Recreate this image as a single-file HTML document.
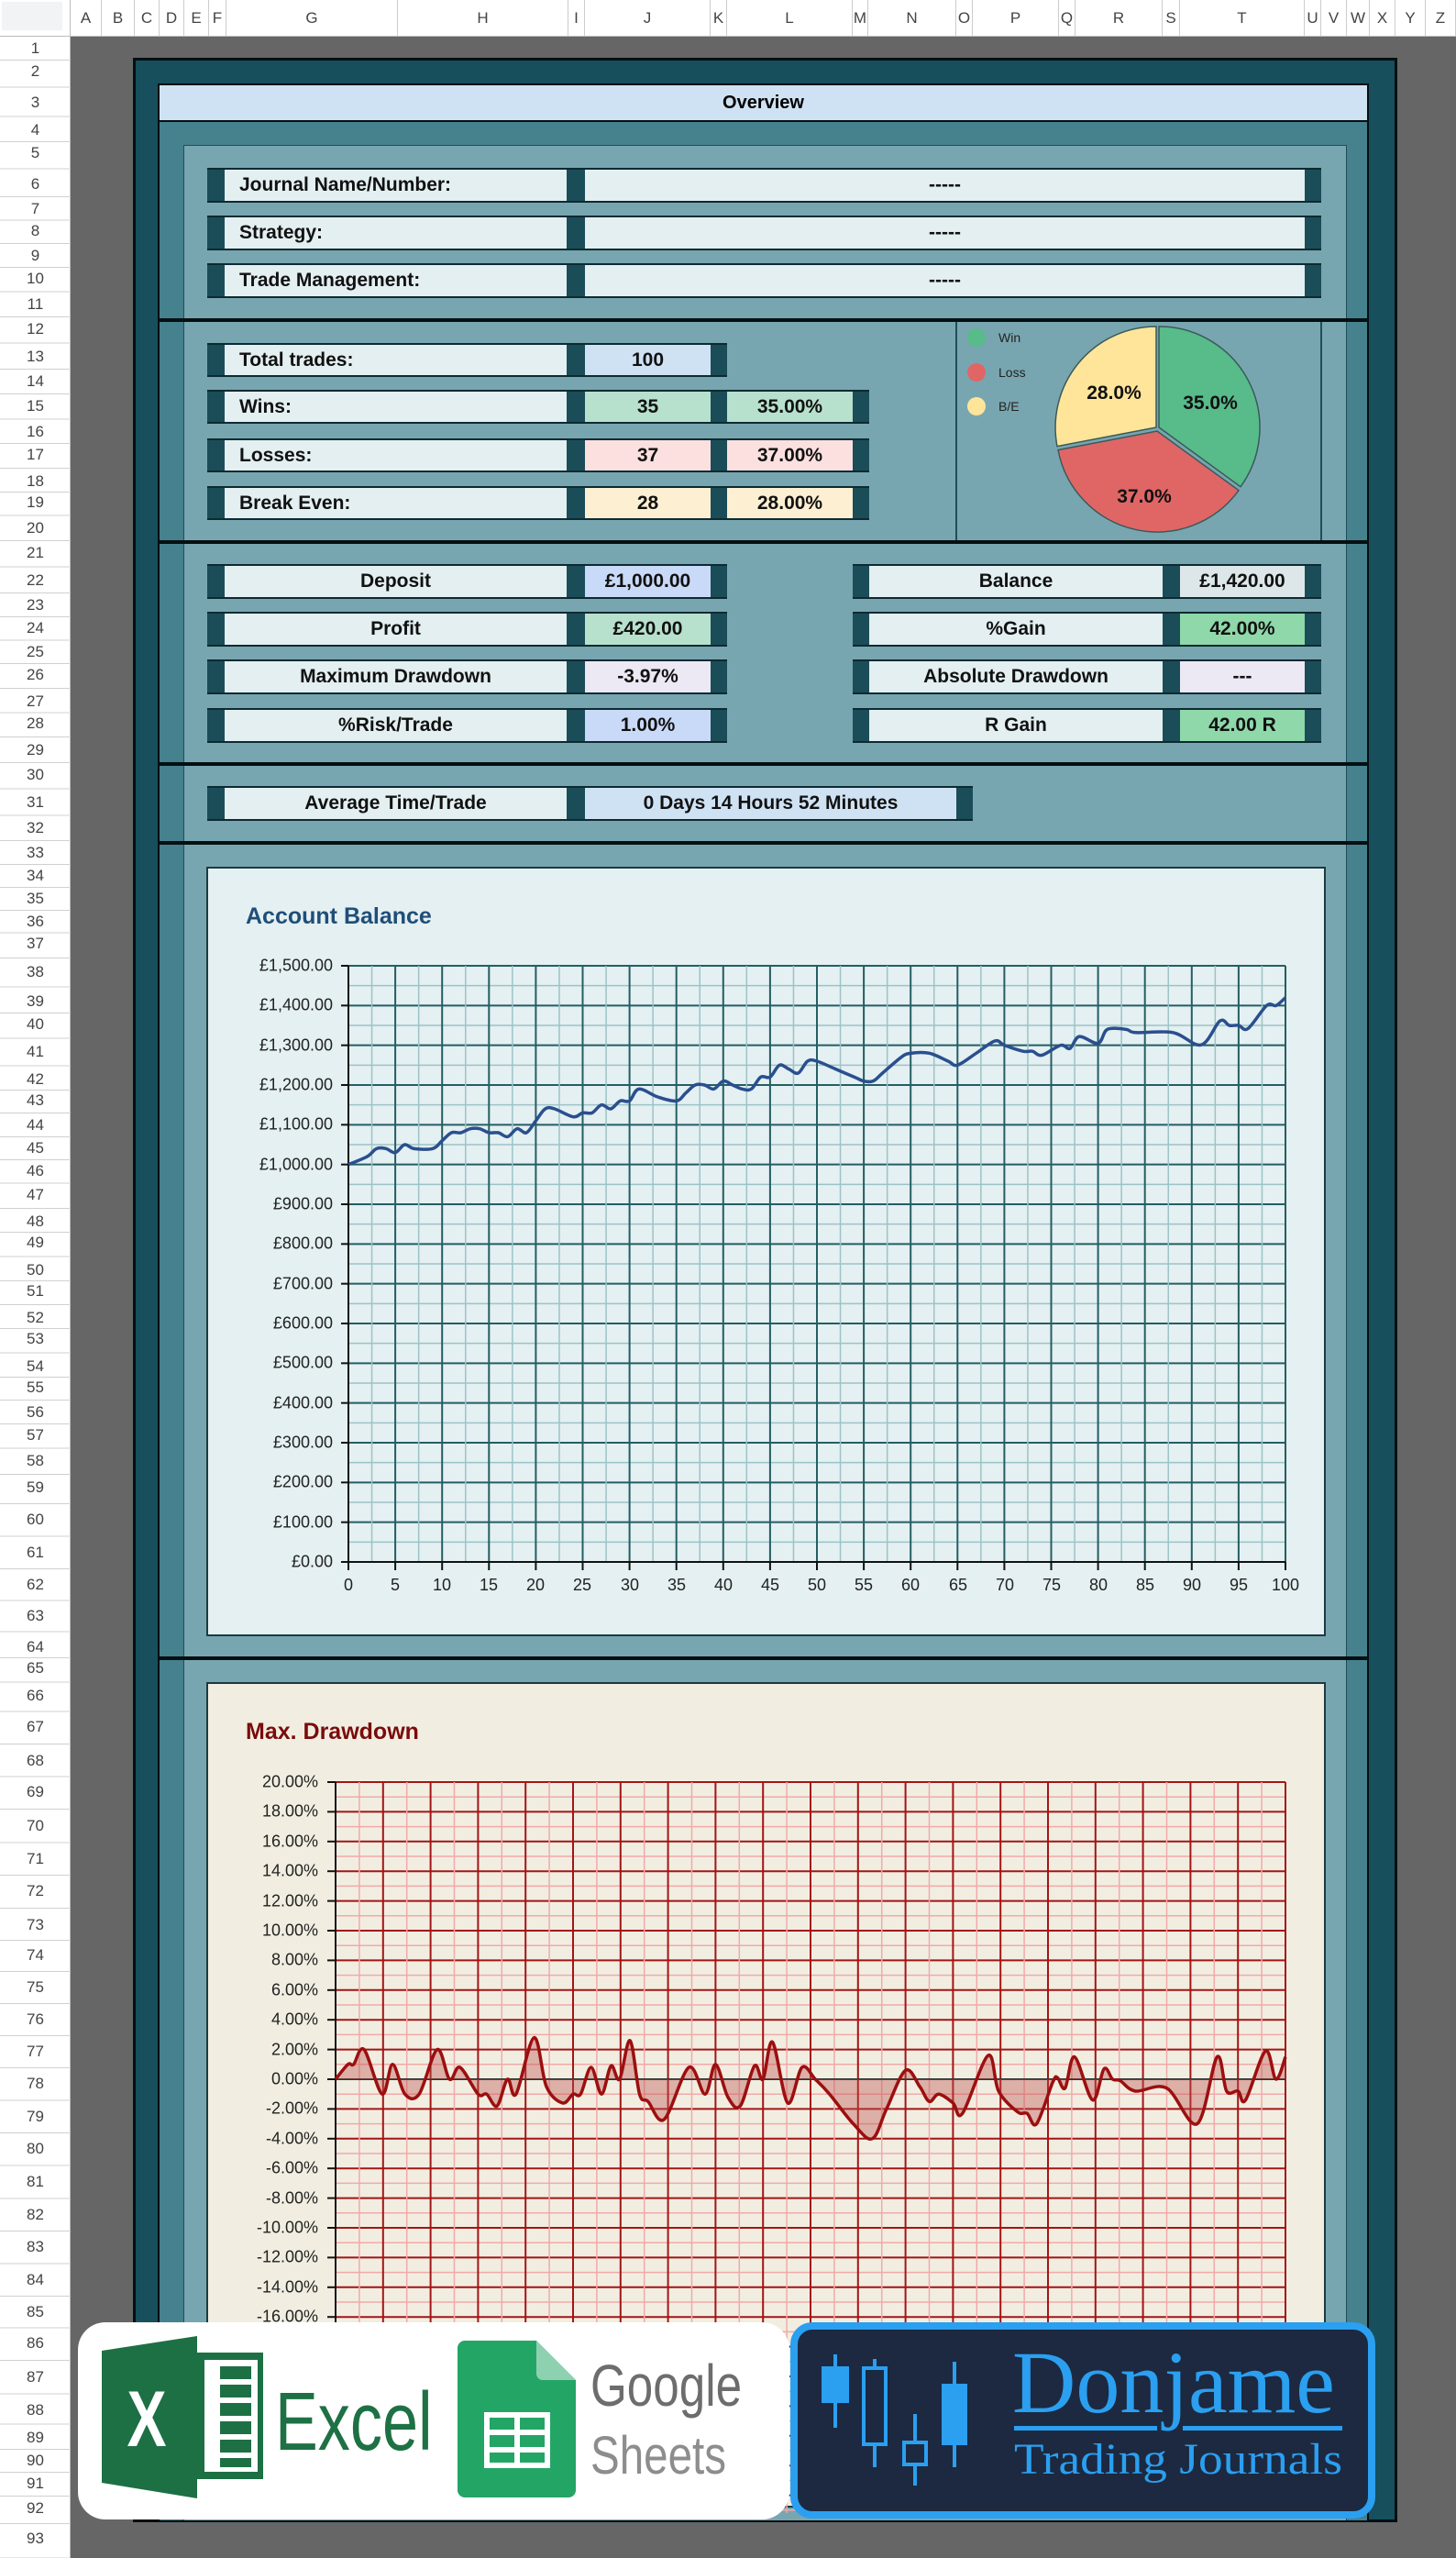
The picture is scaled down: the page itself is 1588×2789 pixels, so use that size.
<!DOCTYPE html>
<html><head><meta charset="utf-8">
<style>
*{margin:0;padding:0;box-sizing:border-box}
body{width:1588px;height:2789px;position:relative;overflow:hidden;background:#666;font-family:"Liberation Sans",Arial,sans-serif}
.a{position:absolute}
.ch{position:absolute;top:0;height:40px;background:#fff;border-right:1px solid #ccc;border-bottom:1px solid #bbb;color:#444;font-size:17px;text-align:center;line-height:40px}
.rh{position:absolute;left:0;width:77px;color:#444;font-size:17px;text-align:center;transform:translateY(-50%)}
.row{position:absolute;background:#1b4d59;border-top:2px solid #0c2a31;border-bottom:2px solid #0c2a31}
.c{position:absolute;top:0;bottom:0;font-weight:bold;font-size:21px;color:#111;display:flex;align-items:center;justify-content:center;white-space:nowrap}
.lbl{background:#e3eff1}
.l{justify-content:flex-start;padding-left:16px}
.yl{position:absolute;font-size:18px;color:#222;text-align:right;width:140px;transform:translateY(-50%)}
.xl{position:absolute;font-size:18px;color:#222;width:40px;text-align:center;transform:translateX(-50%)}
.sep{position:absolute;left:172px;width:1321px;height:4px;background:#050f12}
.inner{position:absolute;left:200px;width:1269px;background:#78a6b0;border-left:1px solid #1e4e58;border-right:1px solid #1e4e58}
</style></head><body>
<div class="a" style="left:0;top:0;width:1588px;height:40px;background:#fff"></div>
<div class="a" style="left:0;top:0;width:77px;height:40px;background:#fff;border-right:1px solid #bbb;border-bottom:1px solid #bbb"><div class="a" style="left:2px;top:2px;width:66px;height:31px;background:#f1f3f4"></div></div>
<div class="ch" style="left:77px;width:34px">A</div>
<div class="ch" style="left:111px;width:36px">B</div>
<div class="ch" style="left:147px;width:27px">C</div>
<div class="ch" style="left:174px;width:27px">D</div>
<div class="ch" style="left:201px;width:27px">E</div>
<div class="ch" style="left:228px;width:19px">F</div>
<div class="ch" style="left:247px;width:187px">G</div>
<div class="ch" style="left:434px;width:186px">H</div>
<div class="ch" style="left:620px;width:18px">I</div>
<div class="ch" style="left:638px;width:137px">J</div>
<div class="ch" style="left:775px;width:18px">K</div>
<div class="ch" style="left:793px;width:137px">L</div>
<div class="ch" style="left:930px;width:17px">M</div>
<div class="ch" style="left:947px;width:96px">N</div>
<div class="ch" style="left:1043px;width:18px">O</div>
<div class="ch" style="left:1061px;width:94px">P</div>
<div class="ch" style="left:1155px;width:18px">Q</div>
<div class="ch" style="left:1173px;width:95px">R</div>
<div class="ch" style="left:1268px;width:19px">S</div>
<div class="ch" style="left:1287px;width:136px">T</div>
<div class="ch" style="left:1423px;width:18px">U</div>
<div class="ch" style="left:1441px;width:28px">V</div>
<div class="ch" style="left:1469px;width:25px">W</div>
<div class="ch" style="left:1494px;width:28px">X</div>
<div class="ch" style="left:1522px;width:33px">Y</div>
<div class="ch" style="left:1555px;width:33px">Z</div>
<div class="a" style="left:0;top:40px;width:77px;height:2749px;background:#fff;border-right:1px solid #bbb"></div>
<div id="rows">
<div class="rh" style="top:53px">1</div><div class="rh" style="top:78px">2</div><div class="rh" style="top:112px">3</div><div class="rh" style="top:142px">4</div><div class="rh" style="top:167px">5</div><div class="rh" style="top:201px">6</div><div class="rh" style="top:228px">7</div><div class="rh" style="top:252px">8</div><div class="rh" style="top:279px">9</div><div class="rh" style="top:304px">10</div><div class="rh" style="top:332px">11</div><div class="rh" style="top:359px">12</div><div class="rh" style="top:389px">13</div><div class="rh" style="top:416px">14</div><div class="rh" style="top:443px">15</div><div class="rh" style="top:471px">16</div><div class="rh" style="top:496px">17</div><div class="rh" style="top:525px">18</div><div class="rh" style="top:548px">19</div><div class="rh" style="top:576px">20</div><div class="rh" style="top:603px">21</div><div class="rh" style="top:633px">22</div><div class="rh" style="top:660px">23</div><div class="rh" style="top:685px">24</div><div class="rh" style="top:711px">25</div><div class="rh" style="top:736px">26</div><div class="rh" style="top:765px">27</div><div class="rh" style="top:789px">28</div><div class="rh" style="top:818px">29</div><div class="rh" style="top:845px">30</div><div class="rh" style="top:875px">31</div><div class="rh" style="top:903px">32</div><div class="rh" style="top:930px">33</div><div class="rh" style="top:955px">34</div><div class="rh" style="top:980px">35</div><div class="rh" style="top:1005px">36</div><div class="rh" style="top:1029px">37</div><div class="rh" style="top:1060px">38</div><div class="rh" style="top:1092px">39</div><div class="rh" style="top:1117px">40</div><div class="rh" style="top:1147px">41</div><div class="rh" style="top:1177px">42</div><div class="rh" style="top:1200px">43</div><div class="rh" style="top:1227px">44</div><div class="rh" style="top:1252px">45</div><div class="rh" style="top:1277px">46</div><div class="rh" style="top:1303px">47</div><div class="rh" style="top:1332px">48</div><div class="rh" style="top:1355px">49</div><div class="rh" style="top:1385px">50</div><div class="rh" style="top:1408px">51</div><div class="rh" style="top:1437px">52</div><div class="rh" style="top:1460px">53</div><div class="rh" style="top:1490px">54</div><div class="rh" style="top:1513px">55</div><div class="rh" style="top:1540px">56</div><div class="rh" style="top:1565px">57</div><div class="rh" style="top:1593px">58</div><div class="rh" style="top:1622px">59</div><div class="rh" style="top:1657px">60</div><div class="rh" style="top:1693px">61</div><div class="rh" style="top:1728px">62</div><div class="rh" style="top:1762px">63</div><div class="rh" style="top:1796px">64</div><div class="rh" style="top:1819px">65</div><div class="rh" style="top:1849px">66</div><div class="rh" style="top:1883px">67</div><div class="rh" style="top:1920px">68</div><div class="rh" style="top:1954px">69</div><div class="rh" style="top:1991px">70</div><div class="rh" style="top:2027px">71</div><div class="rh" style="top:2062px">72</div><div class="rh" style="top:2099px">73</div><div class="rh" style="top:2132px">74</div><div class="rh" style="top:2167px">75</div><div class="rh" style="top:2202px">76</div><div class="rh" style="top:2237px">77</div><div class="rh" style="top:2272px">78</div><div class="rh" style="top:2308px">79</div><div class="rh" style="top:2343px">80</div><div class="rh" style="top:2379px">81</div><div class="rh" style="top:2415px">82</div><div class="rh" style="top:2450px">83</div><div class="rh" style="top:2486px">84</div><div class="rh" style="top:2521px">85</div><div class="rh" style="top:2555px">86</div><div class="rh" style="top:2592px">87</div><div class="rh" style="top:2628px">88</div><div class="rh" style="top:2658px">89</div><div class="rh" style="top:2683px">90</div><div class="rh" style="top:2708px">91</div><div class="rh" style="top:2735px">92</div><div class="rh" style="top:2768px">93</div>
</div>

<div class="a" style="left:145px;top:63px;width:1379px;height:2687px;background:#174f5c;border:3px solid #050f12"></div>
<div class="a" style="left:172px;top:130px;width:1321px;height:2618px;background:#46818e;border-left:2px solid #050f12;border-right:2px solid #050f12"></div>
<div class="a" style="left:172px;top:91px;width:1321px;height:42px;background:#cfe2f3;border:2px solid #050f12;font-weight:bold;font-size:20px;text-align:center;line-height:38px">Overview</div>

<div class="inner" style="top:158px;height:191px;border-top:1px solid #1e4e58"></div>
<div class="inner" style="top:349px;height:242px"></div>
<div class="inner" style="top:591px;height:242px"></div>
<div class="inner" style="top:833px;height:86px"></div>
<div class="inner" style="top:919px;height:889px"></div>
<div class="inner" style="top:1808px;height:940px"></div>
<div class="sep" style="top:347px"></div>
<div class="sep" style="top:589px"></div>
<div class="sep" style="top:831px"></div>
<div class="sep" style="top:917px"></div>
<div class="sep" style="top:1806px"></div>
<div class="a" style="left:1042px;top:351px;width:2px;height:238px;background:#1e4e58"></div>
<div class="a" style="left:1440px;top:351px;width:2px;height:238px;background:#1e4e58"></div>

<div class="row" style="left:226px;top:183px;width:1215px;height:38px"><div class="c lbl l" style="left:19px;width:373px">Journal Name/Number:</div><div class="c lbl" style="left:412px;width:785px">-----</div></div>
<div class="row" style="left:226px;top:235px;width:1215px;height:38px"><div class="c lbl l" style="left:19px;width:373px">Strategy:</div><div class="c lbl" style="left:412px;width:785px">-----</div></div>
<div class="row" style="left:226px;top:287px;width:1215px;height:38px"><div class="c lbl l" style="left:19px;width:373px">Trade Management:</div><div class="c lbl" style="left:412px;width:785px">-----</div></div>

<div class="row" style="left:226px;top:374px;width:567px;height:37px"><div class="c lbl l" style="left:19px;width:373px">Total trades:</div><div class="c" style="left:412px;width:137px;background:#cfe2f3">100</div></div>
<div class="row" style="left:226px;top:425px;width:722px;height:37px"><div class="c lbl l" style="left:19px;width:373px">Wins:</div><div class="c" style="left:412px;width:137px;background:#b7e1cd">35</div><div class="c" style="left:567px;width:137px;background:#b7e1cd">35.00%</div></div>
<div class="row" style="left:226px;top:478px;width:722px;height:37px"><div class="c lbl l" style="left:19px;width:373px">Losses:</div><div class="c" style="left:412px;width:137px;background:#fce0e0">37</div><div class="c" style="left:567px;width:137px;background:#fce0e0">37.00%</div></div>
<div class="row" style="left:226px;top:530px;width:722px;height:37px"><div class="c lbl l" style="left:19px;width:373px">Break Even:</div><div class="c" style="left:412px;width:137px;background:#fcefd2">28</div><div class="c" style="left:567px;width:137px;background:#fcefd2">28.00%</div></div>

<svg class="a" style="left:0;top:0" width="1588" height="700">
<circle cx="1065" cy="368" r="10" fill="#57bb8a"/><circle cx="1065" cy="406" r="10" fill="#e06666"/><circle cx="1065" cy="443" r="10" fill="#ffe599"/>
<text x="1089" y="373" font-size="14" fill="#222" font-family="Liberation Sans">Win</text>
<text x="1089" y="411" font-size="14" fill="#222" font-family="Liberation Sans">Loss</text>
<text x="1089" y="448" font-size="14" fill="#222" font-family="Liberation Sans">B/E</text>
<path d="M1264,466 L1264,356 A110,110 0 0 1 1353,530.7 Z" fill="#57bb8a" stroke="#3a5a5a" stroke-width="1.5"/>
<path d="M1262,470 L1351,534.7 A110,110 0 0 1 1154,490.6 Z" fill="#e06666" stroke="#3a5a5a" stroke-width="1.5"/>
<path d="M1261,466 L1153,486.6 A110,110 0 0 1 1261,356 Z" fill="#ffe599" stroke="#3a5a5a" stroke-width="1.5"/>
<g font-family="Liberation Sans" font-weight="bold" font-size="21" fill="#111" text-anchor="middle">
<text x="1215" y="435">28.0%</text><text x="1320" y="446">35.0%</text><text x="1248" y="548">37.0%</text></g>
</svg>

<div class="row" style="left:226px;top:615px;width:567px;height:38px"><div class="c lbl" style="left:19px;width:373px">Deposit</div><div class="c" style="left:412px;width:137px;background:#c9daf8">£1,000.00</div></div>
<div class="row" style="left:226px;top:667px;width:567px;height:38px"><div class="c lbl" style="left:19px;width:373px">Profit</div><div class="c" style="left:412px;width:137px;background:#b7e1cd">£420.00</div></div>
<div class="row" style="left:226px;top:719px;width:567px;height:38px"><div class="c lbl" style="left:19px;width:373px">Maximum Drawdown</div><div class="c" style="left:412px;width:137px;background:#ece8f4">-3.97%</div></div>
<div class="row" style="left:226px;top:772px;width:567px;height:38px"><div class="c lbl" style="left:19px;width:373px">%Risk/Trade</div><div class="c" style="left:412px;width:137px;background:#c9daf8">1.00%</div></div>
<div class="row" style="left:930px;top:615px;width:511px;height:38px"><div class="c lbl" style="left:18px;width:320px">Balance</div><div class="c" style="left:357px;width:136px;background:#dde6e8">£1,420.00</div></div>
<div class="row" style="left:930px;top:667px;width:511px;height:38px"><div class="c lbl" style="left:18px;width:320px">%Gain</div><div class="c" style="left:357px;width:136px;background:#8ed8aa">42.00%</div></div>
<div class="row" style="left:930px;top:719px;width:511px;height:38px"><div class="c lbl" style="left:18px;width:320px">Absolute Drawdown</div><div class="c" style="left:357px;width:136px;background:#ece8f4">---</div></div>
<div class="row" style="left:930px;top:772px;width:511px;height:38px"><div class="c lbl" style="left:18px;width:320px">R Gain</div><div class="c" style="left:357px;width:136px;background:#8ed8aa">42.00 R</div></div>

<div class="row" style="left:226px;top:857px;width:835px;height:38px"><div class="c lbl" style="left:19px;width:373px">Average Time/Trade</div><div class="c" style="left:412px;width:405px;background:#cfe2f3">0 Days 14 Hours 52 Minutes</div></div>

<div class="a" style="left:225px;top:945px;width:1221px;height:839px;background:#e4f0f2;border:2px solid #1d3a40"></div>
<div class="a" style="left:268px;top:985px;font-size:25px;font-weight:bold;color:#1f4e79">Account Balance</div>
<div class="a" style="left:225px;top:1834px;width:1221px;height:900px;background:#f1eee1;border:2px solid #1d3a40"></div>
<div class="a" style="left:268px;top:1874px;font-size:25px;font-weight:bold;color:#7a0c0c">Max. Drawdown</div>
<svg id="charts" class="a" style="left:0;top:0" width="1588" height="2789"></svg>

<div class="yl" style="left:223px;top:1053px">£1,500.00</div><div class="yl" style="left:223px;top:1096px">£1,400.00</div><div class="yl" style="left:223px;top:1140px">£1,300.00</div><div class="yl" style="left:223px;top:1183px">£1,200.00</div><div class="yl" style="left:223px;top:1226px">£1,100.00</div><div class="yl" style="left:223px;top:1270px">£1,000.00</div><div class="yl" style="left:223px;top:1313px">£900.00</div><div class="yl" style="left:223px;top:1356px">£800.00</div><div class="yl" style="left:223px;top:1400px">£700.00</div><div class="yl" style="left:223px;top:1443px">£600.00</div><div class="yl" style="left:223px;top:1486px">£500.00</div><div class="yl" style="left:223px;top:1530px">£400.00</div><div class="yl" style="left:223px;top:1573px">£300.00</div><div class="yl" style="left:223px;top:1616px">£200.00</div><div class="yl" style="left:223px;top:1660px">£100.00</div><div class="yl" style="left:223px;top:1703px">£0.00</div>
<div class="xl" style="left:380px;top:1718px">0</div><div class="xl" style="left:431px;top:1718px">5</div><div class="xl" style="left:482px;top:1718px">10</div><div class="xl" style="left:533px;top:1718px">15</div><div class="xl" style="left:584px;top:1718px">20</div><div class="xl" style="left:635px;top:1718px">25</div><div class="xl" style="left:687px;top:1718px">30</div><div class="xl" style="left:738px;top:1718px">35</div><div class="xl" style="left:789px;top:1718px">40</div><div class="xl" style="left:840px;top:1718px">45</div><div class="xl" style="left:891px;top:1718px">50</div><div class="xl" style="left:942px;top:1718px">55</div><div class="xl" style="left:993px;top:1718px">60</div><div class="xl" style="left:1045px;top:1718px">65</div><div class="xl" style="left:1096px;top:1718px">70</div><div class="xl" style="left:1147px;top:1718px">75</div><div class="xl" style="left:1198px;top:1718px">80</div><div class="xl" style="left:1249px;top:1718px">85</div><div class="xl" style="left:1300px;top:1718px">90</div><div class="xl" style="left:1351px;top:1718px">95</div><div class="xl" style="left:1402px;top:1718px">100</div>

<div class="yl" style="left:207px;top:1943px">20.00%</div><div class="yl" style="left:207px;top:1975px">18.00%</div><div class="yl" style="left:207px;top:2008px">16.00%</div><div class="yl" style="left:207px;top:2040px">14.00%</div><div class="yl" style="left:207px;top:2073px">12.00%</div><div class="yl" style="left:207px;top:2105px">10.00%</div><div class="yl" style="left:207px;top:2137px">8.00%</div><div class="yl" style="left:207px;top:2170px">6.00%</div><div class="yl" style="left:207px;top:2202px">4.00%</div><div class="yl" style="left:207px;top:2235px">2.00%</div><div class="yl" style="left:207px;top:2267px">0.00%</div><div class="yl" style="left:207px;top:2299px">-2.00%</div><div class="yl" style="left:207px;top:2332px">-4.00%</div><div class="yl" style="left:207px;top:2364px">-6.00%</div><div class="yl" style="left:207px;top:2397px">-8.00%</div><div class="yl" style="left:207px;top:2429px">-10.00%</div><div class="yl" style="left:207px;top:2461px">-12.00%</div><div class="yl" style="left:207px;top:2494px">-14.00%</div><div class="yl" style="left:207px;top:2526px">-16.00%</div><div class="yl" style="left:207px;top:2559px">-18.00%</div><div class="yl" style="left:207px;top:2591px">-20.00%</div>

<div class="a" style="left:85px;top:2532px;width:776px;height:215px;background:#fff;border-radius:30px"></div>
<svg class="a" style="left:0;top:2500px" width="1588" height="289">
<polygon points="111,63 215,47 215,224 111,207" fill="#1d7044"/>
<rect x="215" y="65" width="72" height="138" fill="#1d7044"/>
<rect x="223" y="73" width="58" height="122" fill="#fff"/>
<g fill="#1d7044"><rect x="240" y="80" width="34" height="14"/><rect x="240" y="100" width="34" height="14"/><rect x="240" y="120" width="34" height="14"/><rect x="240" y="140" width="34" height="14"/><rect x="240" y="160" width="34" height="14"/><rect x="240" y="180" width="34" height="10"/></g>
<text x="160" y="167" font-family="Liberation Sans" font-weight="bold" font-size="86" fill="#fff" text-anchor="middle" transform="translate(160 0) scale(0.75 1) translate(-160 0)">X</text>
<text x="300" y="171" font-family="Liberation Sans" font-size="90" fill="#1e7145" transform="translate(300 0) scale(0.78 1) translate(-300 0)">Excel</text>
<path d="M507,52 H585 L628,95 V215 a8,8 0 0 1 -8,8 H507 a8,8 0 0 1 -8,-8 V60 a8,8 0 0 1 8,-8 Z" fill="#23a566"/>
<path d="M585,52 L628,95 H592 a7,7 0 0 1 -7,-7 Z" fill="#8ed1b1"/>
<rect x="528" y="130" width="72" height="61" fill="#fff"/>
<g fill="#23a566"><rect x="534" y="136" width="27" height="13"/><rect x="567" y="136" width="27" height="13"/><rect x="534" y="155" width="27" height="13"/><rect x="567" y="155" width="27" height="13"/><rect x="534" y="174" width="27" height="11"/><rect x="567" y="174" width="27" height="11"/></g>
<text x="644" y="123" font-family="Liberation Sans" font-size="64" fill="#6d6d6d" transform="translate(644 0) scale(0.8 1) translate(-644 0)">Google</text>
<text x="644" y="197" font-family="Liberation Sans" font-size="58" fill="#8d8d8d" transform="translate(644 0) scale(0.82 1) translate(-644 0)">Sheets</text>
<rect x="866" y="36" width="630" height="206" rx="20" fill="#1c2940" stroke="#2b9ff0" stroke-width="8"/>
<g stroke="#2b9ff0" stroke-width="4" fill="none"><line x1="911" y1="67" x2="911" y2="147"/><line x1="954" y1="72" x2="954" y2="190"/><line x1="998" y1="132" x2="998" y2="210"/><line x1="1041" y1="75" x2="1041" y2="190"/>
<rect x="942" y="82" width="24" height="83" fill="#1c2940"/><rect x="986" y="163" width="24" height="24" fill="#1c2940"/></g>
<g fill="#2b9ff0"><rect x="896" y="80" width="30" height="40"/><rect x="1027" y="99" width="28" height="67"/>
<rect x="1106" y="145" width="156" height="5"/><rect x="1290" y="145" width="174" height="5"/></g>
<text x="1104" y="130" font-family="Liberation Serif" font-size="96" fill="#2b9ff0">Donjame</text>
<text x="1106" y="197" font-family="Liberation Serif" font-size="48" fill="#2b9ff0" textLength="358" lengthAdjust="spacingAndGlyphs">Trading Journals</text>
</svg>

<script>
(function(){
var ns="http://www.w3.org/2000/svg",s=document.getElementById('charts');
function el(t,a){var e=document.createElementNS(ns,t);for(var k in a)e.setAttribute(k,a[k]);s.appendChild(e);return e;}
function ln(x1,y1,x2,y2,c,w){el('line',{x1:x1,y1:y1,x2:x2,y2:y2,stroke:c,'stroke-width':w});}
var X0=380,X1=1402,T=1053,B=1703,u=(X1-X0)/100;
for(var i=0;i<=30;i++){var y=T+i*(B-T)/30;ln(X0,y,X1,y,i%2?'#9cc3c6':'#245e63',i%2?1.5:2);}
for(var i=0;i<=40;i++){var x=X0+i*u*2.5;ln(x,T,x,B,i%2?'#9cc3c6':'#245e63',i%2?1.5:2);}
ln(X0,B,X1,B,'#111',2);ln(X0,T,X0,B,'#111',2);
for(var i=0;i<=15;i++){ln(X0-8,T+i*(B-T)/15,X0,T+i*(B-T)/15,'#111',2);}
for(var i=0;i<=20;i++){ln(X0+i*u*5,B,X0+i*u*5,B+9,'#111',2);}
var d1=[[0,1000],[2,1020],[3,1040],[4,1040],[5,1030],[6,1050],[7,1040],[9,1040],[10,1060],[11,1080],[12,1080],[13,1090],[14,1090],[15,1080],[16,1080],[17,1070],[18,1090],[19,1080],[20,1110],[21,1140],[22,1140],[24,1120],[25,1130],[26,1130],[27,1150],[28,1140],[29,1160],[30,1160],[31,1190],[33,1170],[35,1160],[36,1180],[37,1200],[38,1200],[39,1190],[40,1210],[41,1200],[42,1190],[43,1190],[44,1220],[45,1220],[46,1250],[47,1240],[48,1230],[49,1260],[50,1260],[52,1240],[54,1220],[55,1210],[56,1210],[57,1230],[59,1270],[60,1280],[62,1280],[64,1260],[65,1250],[67,1280],[69,1311],[70,1300],[72,1285],[73,1285],[74,1275],[76,1300],[77,1292],[78,1322],[80,1305],[81,1340],[83,1340],[84,1332],[88,1332],[91,1301],[93,1361],[94,1350],[95,1350],[96,1342],[98,1400],[99,1400],[100,1420]];
var p=d1.map(function(d){return [X0+d[0]*u,B-d[1]*(B-T)/1500];});
function smooth(pts){var d='M'+pts[0][0]+','+pts[0][1];for(var i=0;i<pts.length-1;i++){var p0=pts[i-1]||pts[i],p1=pts[i],p2=pts[i+1],p3=pts[i+2]||p2;d+=' C'+(p1[0]+(p2[0]-p0[0])/6)+','+(p1[1]+(p2[1]-p0[1])/6)+' '+(p2[0]-(p3[0]-p1[0])/6)+','+(p2[1]-(p3[1]-p1[1])/6)+' '+p2[0]+','+p2[1];}return d;}
el('path',{d:smooth(p),fill:'none',stroke:'#2a4f8f','stroke-width':3.5,'stroke-linejoin':'round'});
var Y0=366,Y1=1402,T2=1943,Z=2267,pp=16.2,u2=(Y1-Y0)/100,B2=2740;
for(var k=20;k>=-30;k--){var y=Z-k*pp;if(y>B2)break;var mj=(k%2===0);ln(Y0,y,Y1,y,mj?'#a31515':'#f2a9a9',mj?2:1.5);}
for(var i=0;i<=40;i++){var x=Y0+i*u2*2.5;ln(x,T2,x,B2,i%2?'#f2a9a9':'#a31515',i%2?1.5:2);}
ln(Y0,Z,Y1,Z,'#333',2);ln(Y0,T2,Y0,B2,'#111',2);
for(var k=20;k>=-30;k-=2){var y=Z-k*pp;if(y>B2)break;ln(Y0-9,y,Y0,y,'#111',2);}
var d2=[[0,0],[1.3,1],[1.9,1],[3,2],[4.9,-1],[6,1],[7.3,-1],[8.8,-1],[10.7,2],[12,0],[13.1,0.8],[15,-1],[15.9,-1],[17,-1.8],[18.1,0],[19,-1],[20.9,2.8],[22.2,-0.5],[23.9,-1.6],[25,-1],[25.8,-1],[26.9,0.8],[28,-1],[29,0.9],[29.9,0],[31,2.6],[32,-1],[32.9,-1.5],[34.6,-2.7],[37.2,0.8],[38.9,-1],[40,1],[41.3,-1.2],[42.6,-1.8],[44.1,0.9],[45,0],[46,2.5],[47.6,-1.6],[49.1,0.8],[50.5,0],[52,-1],[54.5,-3],[56.5,-4],[58,-2],[60,0.6],[61.5,-0.5],[62.5,-1.5],[63.5,-1],[65,-1.6],[66,-2.3],[68.7,1.6],[69.8,-0.8],[71.8,-2.2],[72.8,-2.3],[73.8,-3],[75.5,-0.2],[76,0.1],[76.8,-0.6],[77.8,1.5],[79.7,-1.4],[80.9,0.7],[81.8,0],[82.6,-0.1],[84.2,-0.8],[87.5,-0.6],[90.7,-3],[92.8,1.5],[93.8,-0.8],[95,-0.8],[95.8,-1.4],[97.9,1.9],[99,0],[100,1.5]];
var q=d2.map(function(d){return [Y0+d[0]*u2,Z-d[1]*pp];});
var sp=smooth(q);
el('path',{d:sp+' L'+Y1+','+Z+' L'+Y0+','+Z+' Z',fill:'rgba(190,80,80,0.4)',stroke:'none'});
el('path',{d:sp,fill:'none',stroke:'#9c0f0f','stroke-width':3.5,'stroke-linejoin':'round'});
var rs=document.querySelectorAll('#rows .rh'),c=[];
for(var i=0;i<rs.length;i++)c.push(parseFloat(rs[i].style.top));
for(var i=0;i<c.length;i++){var b=i<c.length-1?(c[i]+c[i+1])/2:2789;ln(0,b,77,b,'#d0d0d0',1);}
})();
</script>
</body></html>
